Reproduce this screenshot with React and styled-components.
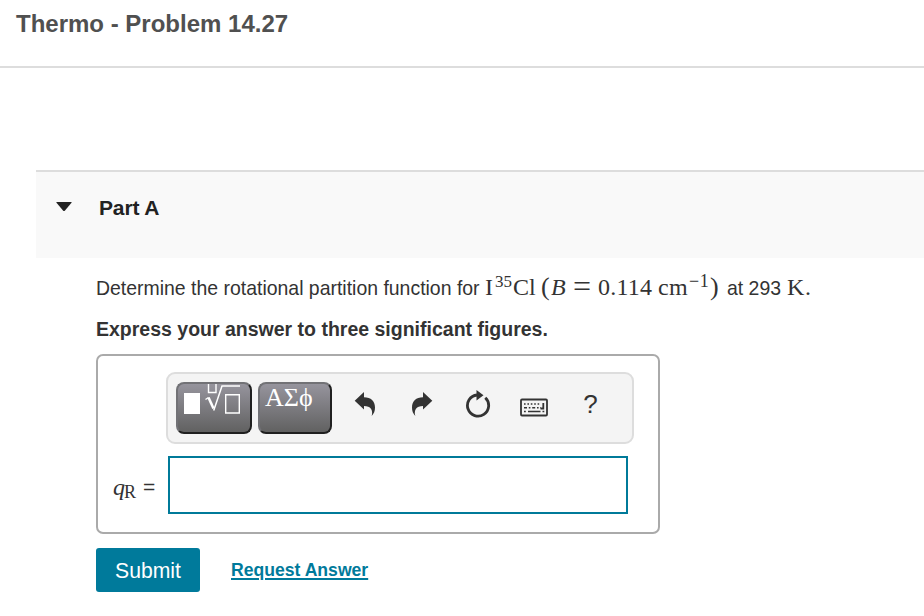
import React from 'react'
import styled, { createGlobalStyle, css } from 'styled-components'

const GlobalStyle = createGlobalStyle`
  * {
    box-sizing: border-box;
  }

  body {
    margin: 0;
    background: #fff;
    color: #333;
    font-family: 'Liberation Sans', Arial, sans-serif;
    overflow: hidden;
  }
`

const serif = css`
  font-family: 'Liberation Serif', 'Times New Roman', serif;
`

const PageHeader = styled.header`
  height: 68px;
  padding: 9px 0 0 16px;
  border-bottom: 2px solid #ddd;
`

const Title = styled.h1`
  margin: 0;
  color: #505050;
  font-size: 24px;
  line-height: 30px;
`

const PartHeader = styled.section`
  display: flex;
  height: 88px;
  margin: 102px 0 0 36px;
  padding: 24px 0 0 20px;
  border-top: 2px solid #ddd;
  background: #f9f9f9;
`

const Caret = styled.svg`
  width: 16px;
  height: 10px;
  margin: 6px 27px 0 0;
`

const PartTitle = styled.h2`
  margin: 0;
  color: #222;
  font-size: 21px;
  line-height: 24px;
  letter-spacing: -0.15px;
`

const Content = styled.section`
  padding: 0 0 0 96px;
`

const Question = styled.p`
  display: flex;
  align-items: baseline;
  height: 43px;
  margin: 0;
  padding-top: 15px;
  font-size: 19.45px;
  line-height: 30px;
  white-space: nowrap;
`

const Words = styled.span`
  width: ${({ $width }) => $width}px;
`

const Term = styled.span`
  ${serif}
  width: ${({ $width }) => $width}px;
  font-size: ${({ $size }) => $size || 24}px;
  font-style: ${({ $italic }) => ($italic ? 'italic' : 'normal')};
  letter-spacing: ${({ $spacing }) => $spacing || 0}px;
  line-height: 20px;
`

const Sup = styled(Term)`
  position: relative;
  top: -8px;
`

const Equals = styled(Term)`
  position: relative;
  top: 2px;
`

const Instruction = styled.p`
  height: 53px;
  margin: 0;
  padding-top: 14px;
  font-size: 19.5px;
  font-weight: 700;
  line-height: 28px;
  white-space: nowrap;
`

const AnswerBox = styled.div`
  width: 564px;
  height: 180px;
  padding: 16px 0 0 15px;
  border: 2px solid #aaa;
  border-radius: 7px;
`

const Toolbar = styled.div`
  display: flex;
  align-items: flex-start;
  width: 468px;
  height: 72px;
  margin-left: 53px;
  padding: 8px;
  border: 2px solid #ddd;
  border-radius: 9px;
  background: #f4f4f4;
`

const MathButton = styled.button`
  ${serif}
  display: flex;
  align-items: flex-start;
  width: ${({ $width }) => $width}px;
  height: 52px;
  margin: 0 6px 0 0;
  padding: 0 0 0 5px;
  border: 2px solid;
  border-color: #727276 #202020 #202020 #727276;
  border-radius: 8px;
  background: linear-gradient(#96949d, #616161);
  color: #fff;
  font-size: 26px;
  line-height: 28px;
`

const IconButton = styled.button`
  width: ${({ $width }) => $width}px;
  height: 52px;
  margin: 0;
  padding: 0;
  border: 0;
  background: none;
  color: #333;

  svg {
    display: block;
    margin: 0 auto;
  }
`

const HelpButton = styled(IconButton)`
  padding: 0 0 7px 1px;
  font-family: 'Liberation Sans', Arial, sans-serif;
  font-size: 26px;
`

const AnswerRow = styled.div`
  display: flex;
  align-items: flex-start;
  padding-top: 12px;
`

const Label = styled.label`
  display: flex;
  align-items: baseline;
  width: 55px;
  padding-top: 19px;
  font-size: 21px;
  line-height: 26px;
`

const LabelEquals = styled.span`
  position: relative;
  top: -1px;
`

const Subscript = styled(Term)`
  position: relative;
  top: 3px;
`

const AnswerInput = styled.input`
  width: 460px;
  height: 58px;
  padding: 0 12px;
  border: 2px solid #007a99;
  border-radius: 0;
  outline: 0;
  background: #fff;
  font-size: 22px;
`

const Actions = styled.div`
  display: flex;
  align-items: center;
  gap: 31px;
  padding-top: 14px;
`

const SubmitButton = styled.button`
  width: 104px;
  height: 44px;
  padding: 2px 0 0;
  border: 0;
  border-radius: 3px;
  background: #007a9b;
  color: #fff;
  font-family: 'Liberation Sans', Arial, sans-serif;
  font-size: 21.2px;
`

const RequestLink = styled.a`
  color: #007a9b;
  font-size: 17.6px;
  font-weight: 700;
  line-height: 24px;
  text-decoration: underline;
  text-decoration-thickness: 2px;
  text-underline-offset: 2px;
`

const TemplateIcon = () => (
  <svg width="60" height="34" viewBox="0 0 60 34" fill="none" stroke="#fff">
    <path d="M1 9h16v21H1z" fill="#fff" stroke="none" />
    <path d="M25.500 0v8.500h7.500V0" strokeWidth="1.400" />
    <path d="M22.500 15.500l3-2" strokeWidth="1.300" />
    <path d="M25.500 13.500l5 11" strokeWidth="2.600" />
    <path d="M30.700 26.500L39 2h18" strokeWidth="1.500" />
    <path d="M42.700 10.700h13.600v18.300H42.700z" strokeWidth="1.400" />
  </svg>
)

const UndoIcon = ({ flipped }) => (
  <svg width="22" height="52" viewBox="0 0 22 52" fill="currentColor">
    <path
      transform={flipped ? 'translate(22 0) scale(-1 1)' : undefined}
      d="M.7 18.700L10 10v5.200C17 15.300 21 19 21 25.500c0 3.500-1 6-3.300 8.500 1.600-6-1-10-7.700-10v3.500z"
    />
  </svg>
)

const ResetIcon = () => (
  <svg width="26" height="52" viewBox="0 0 26 52" fill="none">
    <path
      d="M20.300 15.800A10.600 10.600 0 1 1 12 13"
      stroke="currentColor"
      strokeWidth="2.800"
    />
    <path d="M11.500 8l7 5.300-7 5.300z" fill="currentColor" />
  </svg>
)

const KeyboardIcon = () => (
  <svg width="28" height="52" viewBox="0 0 28 52" fill="none" stroke="currentColor">
    <rect x="1" y="17.500" width="26" height="16" rx="1" strokeWidth="1.800" />
    <path d="M4 22h17" strokeWidth="1.600" strokeDasharray="1.600 1.800" />
    <path d="M4 25.700h17" strokeWidth="1.600" strokeDasharray="3 1.800 1.600 1.800" />
    <path d="M23.300 21v5.500H20.500" strokeWidth="1.800" />
    <path d="M4 29.500h1.800M8 29.500h12.500M22.500 29.500h1.800" strokeWidth="1.600" />
  </svg>
)

const App = () => (
  <main>
    <GlobalStyle />
    <PageHeader>
      <Title>Thermo - Problem 14.27</Title>
    </PageHeader>

    <PartHeader>
      <Caret viewBox="0 0 16 10">
        <path d="M.8 0h14.400q.8 0 .3.800L9 8.500q-1 1-2 0L.5.800Q0 0 .8 0z" fill="#222" />
      </Caret>
      <PartTitle>Part A</PartTitle>
    </PartHeader>

    <Content>
      <Question>
        <Words $width={389}>Determine the rotational partition function for</Words>
        <Term $width={10}>I</Term>
        <Sup $width={18} $size={17}>35</Sup>
        <Term $width={28}>Cl</Term>
        <Term $width={10} $size={26}>(</Term>
        <Term $width={22} $italic>B</Term>
        <Equals $width={25} $size={32}>=</Equals>
        <Term $width={60} $spacing={0.2}>0.114</Term>
        <Term $width={31} $spacing={0.3}>cm</Term>
        <Sup $width={21} $size={18} $spacing={0.7}>−1</Sup>
        <Term $width={17} $size={26}>)</Term>
        <Words $width={60}>at 293</Words>
        <Term $width={18}>K</Term>
        <Term $width={6}>.</Term>
      </Question>
      <Instruction>Express your answer to three significant figures.</Instruction>

      <AnswerBox>
        <Toolbar>
          <MathButton $width={76} aria-label="Templates">
            <TemplateIcon />
          </MathButton>
          <MathButton $width={74}>ΑΣϕ</MathButton>
          <IconButton $width={54} aria-label="Undo">
            <UndoIcon />
          </IconButton>
          <IconButton $width={60} aria-label="Redo">
            <UndoIcon flipped />
          </IconButton>
          <IconButton $width={52} aria-label="Reset">
            <ResetIcon />
          </IconButton>
          <IconButton $width={60} aria-label="Keyboard">
            <KeyboardIcon />
          </IconButton>
          <HelpButton $width={52}>?</HelpButton>
        </Toolbar>
        <AnswerRow>
          <Label htmlFor="answer">
            <Term $width={11} $size={24} $italic>q</Term>
            <Subscript $width={19} $size={18}>R</Subscript>
            <LabelEquals>=</LabelEquals>
          </Label>
          <AnswerInput id="answer" />
        </AnswerRow>
      </AnswerBox>

      <Actions>
        <SubmitButton>Submit</SubmitButton>
        <RequestLink href="#">Request Answer</RequestLink>
      </Actions>
    </Content>
  </main>
)

export default App
